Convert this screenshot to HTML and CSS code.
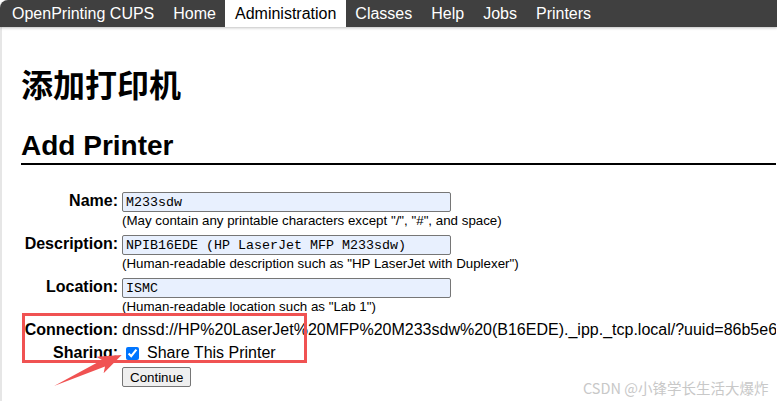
FILE: index.html
```html
<!DOCTYPE html>
<html lang="zh">
<head>
<meta charset="utf-8">
<title>Add Printer - CUPS</title>
<link rel="stylesheet" href="styles.css">
</head>
<body>
<nav class="nav">
  <a class="nav-item">OpenPrinting CUPS</a>
  <a class="nav-item">Home</a>
  <a class="nav-item active">Administration</a>
  <a class="nav-item">Classes</a>
  <a class="nav-item">Help</a>
  <a class="nav-item">Jobs</a>
  <a class="nav-item">Printers</a>
</nav>
<main class="page">
  <h1 class="title">添加打印机</h1>
  <h2 class="subtitle">Add Printer</h2>
  <div class="form">
    <div class="row field-row">
      <span class="label">Name:</span>
      <div class="field">
        <input class="text-input" type="text" value="M233sdw">
        <small class="hint">(May contain any printable characters except "/", "#", and space)</small>
      </div>
    </div>
    <div class="row field-row">
      <span class="label">Description:</span>
      <div class="field">
        <input class="text-input" type="text" value="NPIB16EDE (HP LaserJet MFP M233sdw)">
        <small class="hint">(Human-readable description such as "HP LaserJet with Duplexer")</small>
      </div>
    </div>
    <div class="row field-row">
      <span class="label">Location:</span>
      <div class="field">
        <input class="text-input" type="text" value="ISMC">
        <small class="hint">(Human-readable location such as "Lab 1")</small>
      </div>
    </div>
    <div class="row text-row">
      <span class="label">Connection:</span>
      <div class="value clip">dnssd://HP%20LaserJet%20MFP%20M233sdw%20(B16EDE)._ipp._tcp.local/?uuid=86b5e6</div>
    </div>
    <div class="row text-row">
      <span class="label">Sharing:</span>
      <label class="value check"><input class="checkbox" type="checkbox" checked> Share This Printer</label>
    </div>
    <div class="row button-row">
      <span class="label"></span>
      <div class="value"><button class="btn" type="button">Continue</button></div>
    </div>
  </div>
  <div class="highlight"></div>
  <svg class="arrow" width="777" height="401" viewBox="0 0 777 401">
    <polygon points="54,386 102,360.1 96.2,356.8 121.7,355 103.6,373.2 105,366.5" fill="#f05252"/>
  </svg>
  <div class="watermark">CSDN @小锋学长生活大爆炸</div>
</main>
</body>
</html>
```
FILE: styles.css
```css
html, body {
  margin: 0;
  padding: 0;
  overflow: hidden;
  background: #ffffff;
}
body {
  width: 777px;
  height: 401px;
  font-family: "Liberation Sans", Arial, sans-serif;
  font-size: 16px;
  color: #000;
}
.nav {
  display: flex;
  height: 27px;
  background: #404040;
  border-top-left-radius: 8px;
  padding-left: 2.5px;
  box-shadow: 0 1px 3px rgba(0, 0, 0, 0.25);
  position: relative;
  z-index: 1;
}
.nav-item {
  display: block;
  padding: 0 9.5px;
  line-height: 27px;
  color: #ffffff;
  font-size: 16px;
  white-space: nowrap;
}
.nav-item.active {
  background: #ffffff;
  color: #000000;
}
.page {
  border-left: 2px solid #e6e6e6;
  height: 374px;
  padding: 0 1px 0 19px;
  box-sizing: border-box;
}
.title {
  margin: 0;
  padding-top: 36px;
  font-family: "Noto Sans CJK SC", sans-serif;
  font-size: 32px;
  line-height: 40px;
  font-weight: 700;
}
.subtitle {
  margin: 26px 0 0;
  font-size: 28px;
  line-height: 33px;
  font-weight: 700;
  padding-bottom: 1px;
  border-bottom: 2px solid #000;
}
.form {
  margin-top: 27px;
}
.row {
  display: grid;
  grid-template-columns: 97px 1fr;
  column-gap: 4px;
}
.label {
  font-weight: 700;
  text-align: right;
  white-space: nowrap;
}
.field-row {
  margin-bottom: 6px;
}
.field-row .label {
  line-height: 18px;
}
.field {
  display: flex;
  flex-direction: column;
  align-items: flex-start;
}
.text-input {
  box-sizing: border-box;
  width: 329px;
  height: 20px;
  margin: 0;
  padding: 0 3px;
  border: 1px solid #767676;
  border-radius: 2px;
  background: #e8f0fe;
  font-family: "Liberation Mono", "Courier New", monospace;
  font-size: 13.33px;
  color: #000;
}
.hint {
  font-size: 13.33px;
  line-height: 17px;
}
.text-row {
  line-height: 18px;
  margin-bottom: 5px;
}
.value {
  white-space: nowrap;
}
.clip {
  overflow: hidden;
}
.check {
  display: flex;
  align-items: center;
}
.checkbox {
  margin: 0 8px 0 4px;
  width: 13px;
  height: 13px;
}
.btn {
  margin: 0;
  height: 20px;
  padding: 0 7px;
  font-family: "Liberation Sans", Arial, sans-serif;
  font-size: 13.33px;
  border: 1px solid #767676;
  border-radius: 2px;
  background: #efefef;
  color: #000;
}
.highlight {
  position: absolute;
  left: 22px;
  top: 313px;
  width: 285px;
  height: 50px;
  box-sizing: border-box;
  border: 3px solid #f05252;
}
.arrow {
  position: absolute;
  left: 0;
  top: 0;
  pointer-events: none;
}
.watermark {
  position: absolute;
  left: 583px;
  top: 378px;
  font-family: "Noto Sans CJK SC", sans-serif;
  font-size: 14.5px;
  line-height: 20px;
  color: #c8c8c8;
  white-space: nowrap;
}
```
